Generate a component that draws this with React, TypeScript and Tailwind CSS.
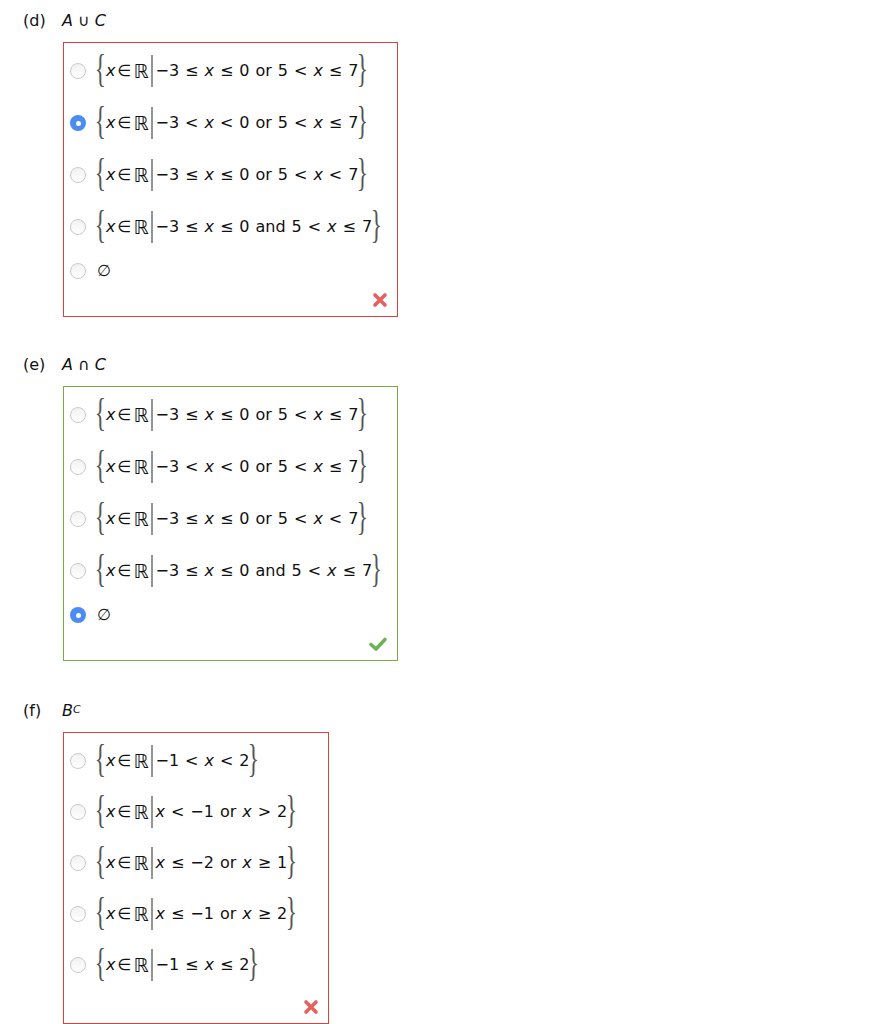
import React from "react";

type Row = { expr?: string; empty?: boolean; checked?: boolean };

function Radio({ checked }: { checked?: boolean }) {
  if (checked) {
    return (
      <span className="w-[16px] h-[16px] rounded-full bg-[#4a8cf0] flex items-center justify-center shrink-0">
        <span className="w-[5px] h-[5px] rounded-full bg-white" />
      </span>
    );
  }
  return (
    <span className="w-[16px] h-[16px] rounded-full border border-[#c9c9c9] bg-gradient-to-b from-[#f2f2f2] to-white shrink-0" />
  );
}

function Brace({ close }: { close?: boolean }) {
  return (
    <span className="w-[8px] h-[34px] flex items-center justify-center overflow-visible">
      <span className="font-['Liberation_Serif'] text-[39px] leading-none text-[#555] scale-x-[0.6] -mt-[5px]">
        {close ? "}" : "{"}
      </span>
    </span>
  );
}

function Expr({ s }: { s: string }) {
  const parts = s.split(/(x)/);
  return (
    <span className="whitespace-pre [word-spacing:0.9px]">
      {parts.map((p, i) =>
        p === "x" ? (
          <span key={i} className="italic">
            x
          </span>
        ) : (
          <span key={i}>{p}</span>
        )
      )}
    </span>
  );
}

function SetExpr({ s }: { s: string }) {
  return (
    <span className="flex items-center h-[34px]">
      <Brace />
      <span className="italic ml-[2px]">x</span>
      <span className="mx-[2px]">∈</span>
      <span className="text-[19px] leading-none">ℝ</span>
      <span className="w-[2px] h-[32px] bg-[#949494] ml-[3px] mr-[2px]" />
      <Expr s={s} />
      <Brace close />
    </span>
  );
}

function XIcon() {
  return (
    <svg width="16" height="16" viewBox="0 0 16 16">
      <path d="M3 3 L13 13 M13 3 L3 13" stroke="#e8605e" strokeWidth="3.6" strokeLinecap="round" />
    </svg>
  );
}

function CheckIcon() {
  return (
    <svg width="20" height="16" viewBox="0 0 20 16">
      <path d="M3 8.5 L8 13 L17 3.5" stroke="#6cb356" strokeWidth="3.6" strokeLinecap="round" strokeLinejoin="round" fill="none" />
    </svg>
  );
}

function Question({
  letter,
  label,
  rows,
  correct,
  width,
  mt,
  iconMt,
  gap,
  pt,
}: {
  letter: string;
  label: React.ReactNode;
  rows: Row[];
  correct: boolean;
  width: string;
  mt: string;
  iconMt: string;
  gap: string;
  pt: string;
}) {
  return (
    <div className={mt}>
      <div className="flex items-center h-[18px] pl-[23px]">
        <span className="w-[39px]">({letter})</span>
        <span>{label}</span>
      </div>
      <div
        className={`ml-[63px] mt-[12px] border ${
          correct ? "border-[#79ab48]" : "border-[#d8433e]"
        } ${width} pl-[6px] ${pt} pr-[9px] pb-[8px]`}
      >
        <div className={`flex flex-col ${gap}`}>
          {rows.map((r, i) => (
            <div key={i} className={`flex items-center ${r.empty ? "h-[18px]" : "h-[34px]"}`}>
              <Radio checked={r.checked} />
              <span className="ml-[10px] flex items-center">
                {r.empty ? <span className="pl-[1px]">∅</span> : <SetExpr s={r.expr!} />}
              </span>
            </div>
          ))}
        </div>
        <div className={`flex justify-end ${iconMt} h-[16px] items-center`}>
          {correct ? <CheckIcon /> : <XIcon />}
        </div>
      </div>
    </div>
  );
}

const rowsDE = (checkIdx: number): Row[] => [
  { expr: "−3 ≤ x ≤ 0 or 5 < x ≤ 7", checked: checkIdx === 0 },
  { expr: "−3 < x < 0 or 5 < x ≤ 7", checked: checkIdx === 1 },
  { expr: "−3 ≤ x ≤ 0 or 5 < x < 7", checked: checkIdx === 2 },
  { expr: "−3 ≤ x ≤ 0 and 5 < x ≤ 7", checked: checkIdx === 3 },
  { empty: true, checked: checkIdx === 4 },
];

const rowsF: Row[] = [
  { expr: "−1 < x < 2" },
  { expr: "x < −1 or x > 2" },
  { expr: "x ≤ −2 or x ≥ 1" },
  { expr: "x ≤ −1 or x ≥ 2" },
  { expr: "−1 ≤ x ≤ 2" },
];

export default function App() {
  return (
    <div className="min-h-[1024px] w-[893px] bg-white text-[#111] font-['DejaVu_Sans',sans-serif] text-[16px] pt-[12px]">
      <Question
        letter="d"
        label={
          <>
            <span className="italic">A</span> ∪ <span className="italic">C</span>
          </>
        }
        rows={rowsDE(1)}
        correct={false}
        width="w-[335px]"
        mt=""
        iconMt="mt-[12px]"
        gap="gap-[18px]"
        pt="pt-[11px]"
      />
      <Question
        letter="e"
        label={
          <>
            <span className="italic">A</span> ∩ <span className="italic">C</span>
          </>
        }
        rows={rowsDE(4)}
        correct={true}
        width="w-[335px]"
        mt="mt-[39px]"
        iconMt="mt-[12px]"
        gap="gap-[18px]"
        pt="pt-[11px]"
      />
      <Question
        letter="f"
        label={
          <>
            <span className="italic">B</span>
            <sup className="italic text-[11px] relative -top-[3px]">C</sup>
          </>
        }
        rows={rowsF}
        correct={false}
        width="w-[266px]"
        mt="mt-[41px]"
        iconMt="mt-[17px]"
        gap="gap-[17px]"
        pt="pt-[11px]"
      />
    </div>
  );
}
